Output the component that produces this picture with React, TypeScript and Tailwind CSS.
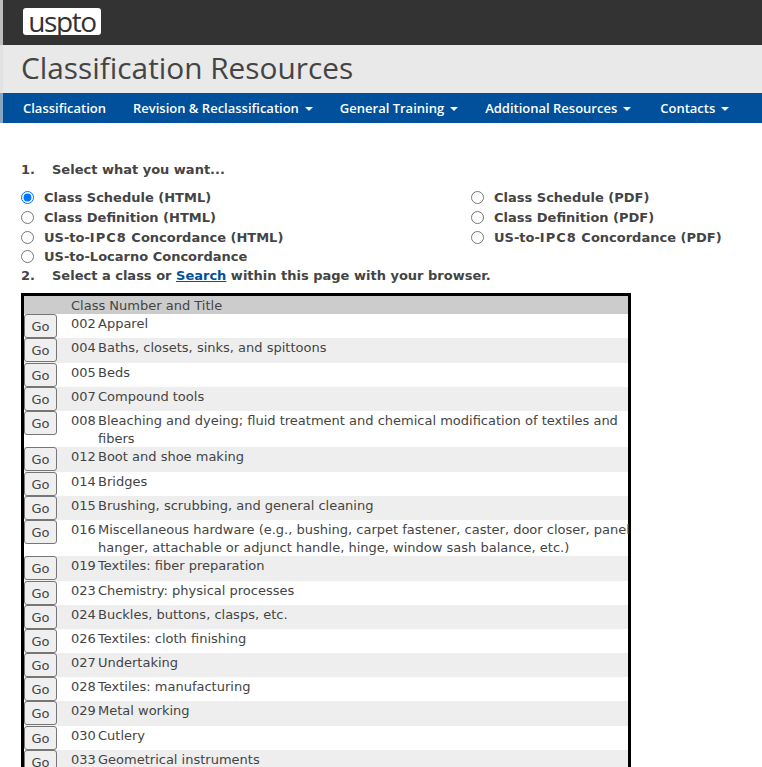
import type { ReactNode } from "react";

const topNav = [
  { label: "Classification", caret: false },
  { label: "Revision & Reclassification", caret: true },
  { label: "General Training", caret: true },
  { label: "Additional Resources", caret: true },
  { label: "Contacts", caret: true },
];

const ipc = <span className="tracking-[1px]">IPC8</span>;

const leftOptions: ReactNode[] = [
  "Class Schedule (HTML)",
  "Class Definition (HTML)",
  <>US-to-{ipc} Concordance (HTML)</>,
];
const rightOptions: ReactNode[] = [
  "Class Schedule (PDF)",
  "Class Definition (PDF)",
  <>US-to-{ipc} Concordance (PDF)</>,
];

// the last column is the row height, the browser rounds these unevenly in the original
const classes = [
  ["002", "Apparel", "h-6"],
  ["004", "Baths, closets, sinks, and spittoons", "h-[25px]"],
  ["005", "Beds", "h-6"],
  ["007", "Compound tools", "h-6"],
  ["008", "Bleaching and dyeing; fluid treatment and chemical modification of textiles and fibers", "h-9"],
  ["012", "Boot and shoe making", "h-[25px]"],
  ["014", "Bridges", "h-6"],
  ["015", "Brushing, scrubbing, and general cleaning", "h-6"],
  ["016", "Miscellaneous hardware (e.g., bushing, carpet fastener, caster, door closer, panel hanger, attachable or adjunct handle, hinge, window sash balance, etc.)", "h-9"],
  ["019", "Textiles: fiber preparation", "h-[25px]"],
  ["023", "Chemistry: physical processes", "h-6"],
  ["024", "Buckles, buttons, clasps, etc.", "h-6"],
  ["026", "Textiles: cloth finishing", "h-6"],
  ["027", "Undertaking", "h-6"],
  ["028", "Textiles: manufacturing", "h-6"],
  ["029", "Metal working", "h-[25px]"],
  ["030", "Cutlery", "h-6"],
  ["033", "Geometrical instruments", "h-6"],
];

const Radio = ({ checked = false, label }: { checked?: boolean; label: ReactNode }) => (
  <label className="flex h-5 items-center">
    <input type="radio" name="kind" defaultChecked={checked} className="m-0 mb-px h-[13px] w-[13px] accent-[#0075ff]" />
    <span className="ml-[10px]">{label}</span>
  </label>
);

export default function App() {
  return (
    <div className="h-[767px] w-[762px] overflow-hidden bg-white font-['DejaVu_Sans',sans-serif] text-[13px] text-[#444444]">
      {/* header */}
      <div className="flex h-[45px] border-l-[3px] border-l-[#bdbdbd] bg-[#333333] pl-5 pt-2">
        <div className="flex h-[27px] w-[78px] items-center justify-center rounded-[3px] bg-white pb-px font-['Open_Sans',sans-serif] text-[28px] font-medium leading-none tracking-[-1.4px] text-[#333333]">
          uspto
        </div>
      </div>
      <div className="flex h-[48px] items-center border-l-[3px] border-l-[#e2e2e2] bg-[#e9e9e9] pb-px pl-[18px] font-['Open_Sans',sans-serif] text-[29.8px] text-[#444444]">
        Classification Resources
      </div>
      <nav className="flex h-[30px] items-center whitespace-nowrap border-l-[3px] border-l-[#86a6c2] bg-[#00509b] pl-5 pt-px font-['Open_Sans',sans-serif] text-[13px] font-semibold text-white">
        {topNav.map((item) => (
          <div key={item.label} className="mr-[27px] flex items-center last:ml-[2px]">
            {item.label}
            {item.caret && (
              <span className="ml-[6px] mt-px h-0 w-0 border-x-4 border-t-4 border-x-transparent border-t-white" />
            )}
          </div>
        ))}
      </nav>

      {/* form */}
      <div className="px-[21px] pt-[37px] font-bold">
        <div className="flex h-5 items-center">
          <span className="w-[31px]">1.</span>
          Select what you want...
        </div>
        <div className="mt-[8px] grid grid-cols-[450px_1fr]">
          <div>
            {leftOptions.map((option, i) => (
              <Radio key={i} label={option} checked={i === 0} />
            ))}
          </div>
          <div>
            {rightOptions.map((option, i) => (
              <Radio key={i} label={option} />
            ))}
          </div>
        </div>
        <div className="-mt-px">
          <Radio label="US-to-Locarno Concordance" />
        </div>
        <div className="flex h-[18px] items-center">
          <span className="w-[31px]">2.</span>
          <span>
            Select a class or <a className="text-[#00509b] underline">Search</a> within this page with your browser.
          </span>
        </div>

        {/* class table */}
        <div className="mt-[8px] w-[610px] border-[3px] border-b-0 border-black font-normal">
          <div className="flex h-[18px] items-center bg-[#cccccc] pl-[47px] pt-px">Class Number and Title</div>
          {classes.map(([num, title, height], i) => (
            <div key={num} className={`flex ${height} ${i % 2 === 1 ? "bg-[#eeeeee]" : "bg-white"}`}>
              <button className="h-[24px] w-[33px] shrink-0 rounded-[3px] border border-[#767676] bg-[#efefef] text-center text-[13px] leading-none">
                Go
              </button>
              <div className="ml-[14px] w-[27px] shrink-0 pt-px leading-[18px]">{num}</div>
              <div className="-mr-2 pt-px leading-[18px]">{title}</div>
            </div>
          ))}
        </div>
      </div>
    </div>
  );
}
